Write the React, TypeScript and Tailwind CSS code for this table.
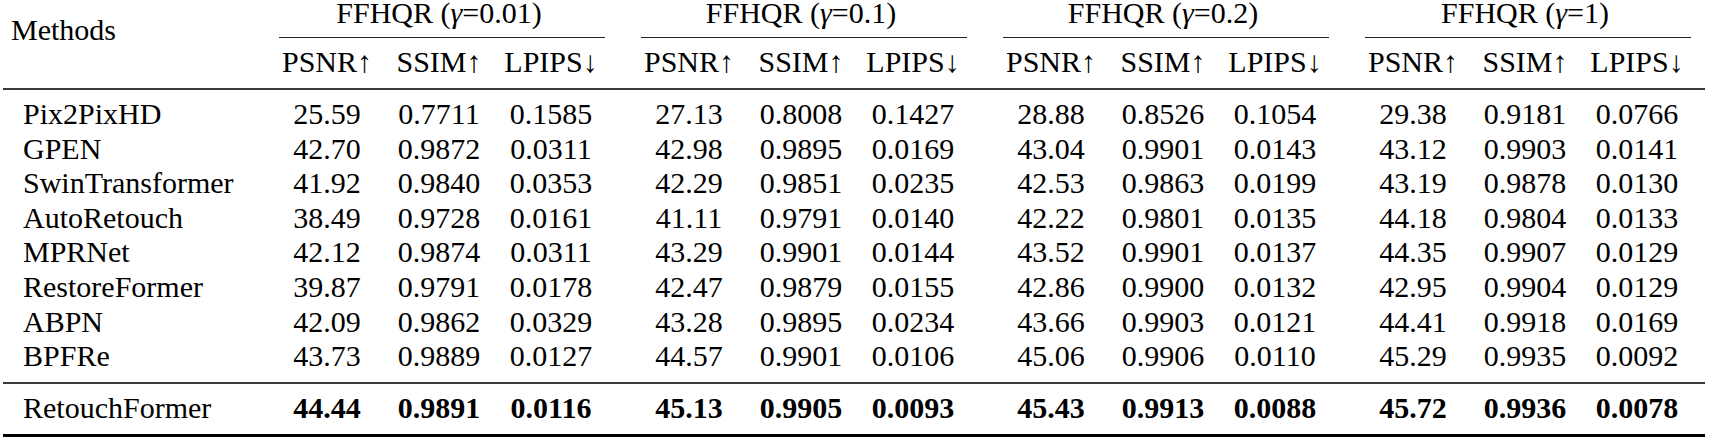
import React from "react";

const SERIF = { fontFamily: "'Liberation Serif', serif" };

const gammas = ["0.01", "0.1", "0.2", "1"];
const methods = ["Pix2PixHD", "GPEN", "SwinTransformer", "AutoRetouch", "MPRNet", "RestoreFormer", "ABPN", "BPFRe"];
const data: string[][] = [
  ["25.59", "0.7711", "0.1585", "27.13", "0.8008", "0.1427", "28.88", "0.8526", "0.1054", "29.38", "0.9181", "0.0766"],
  ["42.70", "0.9872", "0.0311", "42.98", "0.9895", "0.0169", "43.04", "0.9901", "0.0143", "43.12", "0.9903", "0.0141"],
  ["41.92", "0.9840", "0.0353", "42.29", "0.9851", "0.0235", "42.53", "0.9863", "0.0199", "43.19", "0.9878", "0.0130"],
  ["38.49", "0.9728", "0.0161", "41.11", "0.9791", "0.0140", "42.22", "0.9801", "0.0135", "44.18", "0.9804", "0.0133"],
  ["42.12", "0.9874", "0.0311", "43.29", "0.9901", "0.0144", "43.52", "0.9901", "0.0137", "44.35", "0.9907", "0.0129"],
  ["39.87", "0.9791", "0.0178", "42.47", "0.9879", "0.0155", "42.86", "0.9900", "0.0132", "42.95", "0.9904", "0.0129"],
  ["42.09", "0.9862", "0.0329", "43.28", "0.9895", "0.0234", "43.66", "0.9903", "0.0121", "44.41", "0.9918", "0.0169"],
  ["43.73", "0.9889", "0.0127", "44.57", "0.9901", "0.0106", "45.06", "0.9906", "0.0110", "45.29", "0.9935", "0.0092"],
];
const ours = ["44.44", "0.9891", "0.0116", "45.13", "0.9905", "0.0093", "45.43", "0.9913", "0.0088", "45.72", "0.9936", "0.0078"];

function DataRow({ name, values, bold }: { name: string; values: string[]; bold?: boolean }) {
  return (
    <div style={SERIF} className="flex h-[34.6px] leading-[34.6px]">
      <div className="w-[268px] shrink-0 pl-[20px] whitespace-nowrap">{name}</div>
      {[0, 1, 2, 3].map((g) => (
        <div
          key={g}
          className={
            "w-[336px] shrink-0 grid grid-cols-3 text-center " + (g > 0 ? "ml-[26px] " : "") + (bold ? "font-bold" : "")
          }
        >
          {values.slice(g * 3, g * 3 + 3).map((v, i) => (
            <div key={i}>{v}</div>
          ))}
        </div>
      ))}
    </div>
  );
}

export default function App() {
  return (
    <div style={SERIF} className="w-[1710px] h-[441px] bg-white text-black overflow-hidden">
      <div style={SERIF} className="ml-[3px] w-[1702px] text-[30px]">
        <div style={SERIF} className="flex">
          <div className="w-[268px] shrink-0 pl-[8px] pt-[13px] leading-[34px]">Methods</div>
          {gammas.map((g, i) => (
            <div key={g} className={"w-[336px] shrink-0 flex flex-col " + (i > 0 ? "ml-[26px]" : "")}>
              <div className="h-[37px] text-center leading-[24px] whitespace-nowrap pt-px">
                FFHQR (<i>γ</i>={g})
              </div>
              <div className="h-px ml-[8px] mr-[2px] bg-[#222]" />
              <div className="h-[50px] grid grid-cols-3 text-center leading-[48px] whitespace-nowrap">
                <div>PSNR↑</div>
                <div>SSIM↑</div>
                <div>LPIPS↓</div>
              </div>
            </div>
          ))}
        </div>
        <div className="h-[2px] bg-[#3a3a3a]" />
        <div className="pt-[7px] pb-[8px]">
          {methods.map((m, r) => (
            <DataRow key={m} name={m} values={data[r]} />
          ))}
        </div>
        <div className="h-[2px] bg-[#3a3a3a]" />
        <div className="pt-[7px] pb-[9px]">
          <DataRow name="RetouchFormer" values={ours} bold />
        </div>
        <div className="h-[3px] bg-black" />
      </div>
    </div>
  );
}
